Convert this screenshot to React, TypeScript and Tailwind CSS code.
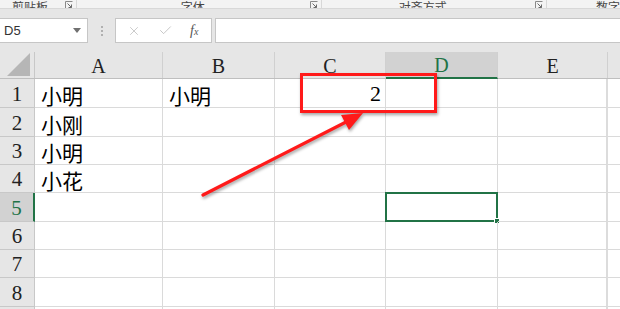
import React from 'react';
import { X, Check } from 'lucide-react';

const cols = [
  { key: 'A', w: 128 },
  { key: 'B', w: 112 },
  { key: 'C', w: 111 },
  { key: 'D', w: 112 },
  { key: 'E', w: 110 },
  { key: 'F', w: 40 },
];

const rowHeights = [29, 29, 28, 28, 29, 28, 28, 29, 28];

const data: Record<string, string> = {
  A1: '小明',
  B1: '小明',
  C1: '2',
  A2: '小刚',
  A3: '小明',
  A4: '小花',
};

const cjk = "font-['Noto_Sans_CJK_SC',sans-serif]";
const serif = "font-['Liberation_Serif','Noto_Sans_CJK_SC',serif]";

const Launcher: React.FC = () => (
  <svg width="8" height="8" viewBox="0 0 8 8" className="shrink-0">
    <path d="M0.5 0.5H7.5M0.5 0.5V7.5" stroke="#8a8a8a" strokeWidth="1" fill="none" />
    <path d="M2.5 2.5L6.5 6.5M6.5 3.5V6.5H3.5" stroke="#6a6a6a" strokeWidth="1" fill="none" />
  </svg>
);

const Ribbon: React.FC = () => (
  <div className={`h-[9px] flex bg-[#f3f3f3] border-b border-[#d8d8d8] overflow-hidden text-[12px] text-[#444] ${cjk}`}>
    <div className="w-[77px] flex items-end justify-between pr-[3px] border-r border-[#d8d8d8]">
      <span className="ml-[12px] -mb-[5px] leading-none">剪贴板</span>
      <div className="-mb-[1px]"><Launcher /></div>
    </div>
    <div className="w-[246px] flex items-end justify-between pr-[3px] border-r border-[#d8d8d8]">
      <span className="ml-[104px] -mb-[5px] leading-none">字体</span>
      <div className="-mb-[1px]"><Launcher /></div>
    </div>
    <div className="w-[226px] flex items-end justify-between pr-[3px] border-r border-[#d8d8d8]">
      <span className="ml-[77px] -mb-[5px] leading-none">对齐方式</span>
      <div className="-mb-[1px]"><Launcher /></div>
    </div>
    <div className="flex-1 flex items-end">
      <span className="ml-[49px] -mb-[5px] leading-none whitespace-nowrap">数字</span>
    </div>
  </div>
);

const FormulaBar: React.FC = () => (
  <div className="h-[43px] bg-[#e6e6e6] flex items-start pt-[9px]">
    <div className="w-[88px] h-[25px] bg-white border border-l-0 border-[#c6c6c6] flex items-center justify-between pl-[4px] pr-[6px]">
      <span className="text-[13px] text-[#333] font-['Liberation_Sans',sans-serif]">D5</span>
      <svg width="8" height="5" viewBox="0 0 8 5"><path d="M0 0H8L4 5Z" fill="#707070" /></svg>
    </div>
    <div className="w-[27px] h-[25px] flex flex-col items-center justify-center gap-[2px]">
      <span className="w-[2px] h-[2px] bg-[#b0b0b0]" />
      <span className="w-[2px] h-[2px] bg-[#b0b0b0]" />
      <span className="w-[2px] h-[2px] bg-[#b0b0b0]" />
    </div>
    <div className="w-[97px] h-[25px] bg-white border border-[#c6c6c6] flex items-center pl-[11px]">
      <X size={14} strokeWidth={1.2} color="#b4b4b4" />
      <Check size={15} strokeWidth={1.2} color="#b4b4b4" className="ml-[17px]" />
      <span className={`ml-[17px] italic text-[14px] text-[#555] ${serif}`}>f<span className="text-[10px]">x</span></span>
    </div>
    <div className="ml-[3px] flex-1 h-[25px] bg-white border border-r-0 border-[#c6c6c6]" />
  </div>
);

const HeaderRow: React.FC = () => (
  <div className="h-[27px] flex bg-[#e6e6e6] border-b border-[#bfbfbf]">
    <div className="w-[35px] shrink-0 relative border-r border-[#c8c8c8]">
      <svg width="24" height="23" viewBox="0 0 24 23" className="absolute right-[3px] bottom-[2px]">
        <path d="M23 0V23H0Z" fill="#b6b6b6" />
      </svg>
    </div>
    {cols.map((c) => {
      const sel = c.key === 'D';
      return (
        <div
          key={c.key}
          style={{ width: c.w }}
          className={`shrink-0 flex items-end justify-center pb-[1px] text-[20px] leading-none ${serif} border-r border-[#d0d0d0] ${
            sel ? 'bg-[#d2d2d2] text-[#217346] border-b-2 border-b-[#217346] -mb-[1px]' : 'text-[#222]'
          }`}
        >
          <span className="pb-[1px]">{c.key === 'F' ? '' : c.key}</span>
        </div>
      );
    })}
  </div>
);

const App: React.FC = () => {
  return (
    <div className="relative w-[620px] h-[309px] overflow-hidden bg-white">
      <Ribbon />
      <FormulaBar />
      <HeaderRow />
      {rowHeights.map((h, i) => {
        const r = i + 1;
        const selRow = r === 5;
        return (
          <div key={r} style={{ height: h }} className="flex">
            <div
              className={`w-[35px] shrink-0 flex items-end justify-center text-[21px] leading-none ${serif} border-b border-[#c8c8c8] ${
                selRow ? 'bg-[#d2d2d2] text-[#217346] border-r-2 border-r-[#217346]' : 'bg-[#e6e6e6] text-[#222] border-r border-r-[#c8c8c8]'
              }`}
            >
              <span className="pb-[2px]">{r}</span>
            </div>
            {cols.map((c) => {
              const id = `${c.key}${r}`;
              const v = data[id];
              const isNum = v !== undefined && /^\d+$/.test(v);
              const isSel = id === 'D5';
              return (
                <div
                  key={id}
                  style={{ width: c.w }}
                  className={`relative shrink-0 flex items-end border-r border-b ${
                    c.key === 'E' ? 'border-r-[#dcdcdc] border-r-2' : 'border-r-[#dadada]'
                  } border-b-[#dadada] ${isNum ? 'justify-end pr-[4px]' : 'justify-start pl-[6px]'}`}
                >
                  {v && (
                    <span
                      className={`leading-none text-black ${isNum ? `text-[22px] pb-[2px] ${serif}` : `text-[21px] pb-[1px] ${cjk}`}`}
                    >
                      {v}
                    </span>
                  )}
                  {isSel && (
                    <div className="absolute -left-[1px] -top-[1px] -right-[1px] -bottom-[1px] border-2 border-[#217346]">
                      <div className="absolute -right-[4px] -bottom-[4px] w-[6px] h-[6px] bg-[#217346] border border-white" />
                    </div>
                  )}
                </div>
              );
            })}
          </div>
        );
      })}

      {/* red highlight box */}
      <div className="absolute left-[300px] top-[73px] w-[137px] h-[40px] border-[3px] border-[#ff1a1a] shadow-[1px_2px_3px_rgba(0,0,0,0.35)]" />

      {/* red arrow */}
      <svg
        width="620"
        height="309"
        viewBox="0 0 620 309"
        className="absolute left-0 top-0 pointer-events-none drop-shadow-[1px_2px_1.5px_rgba(0,0,0,0.35)]"
      >
        <line x1="203" y1="195" x2="348" y2="121" stroke="#ff1a1a" strokeWidth="3.2" strokeLinecap="round" />
        <polygon points="363,113 341,115 349,130" fill="#ff1a1a" />
      </svg>
    </div>
  );
};

export default App;
